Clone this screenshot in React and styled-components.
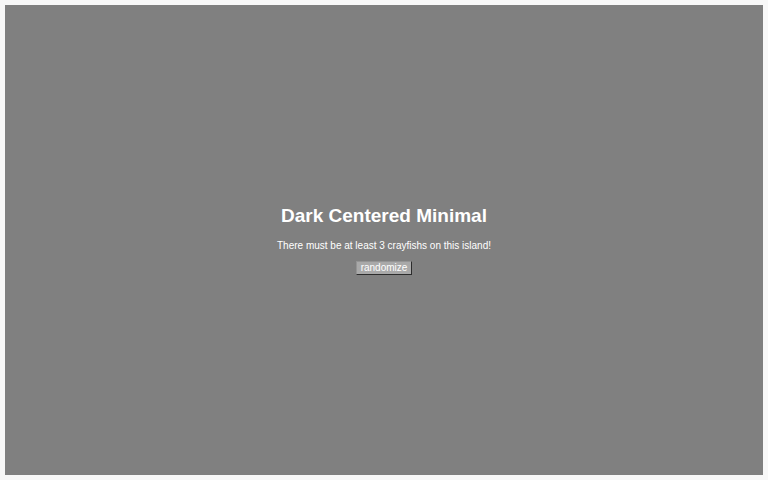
import { useState } from "react";
import styled, { createGlobalStyle } from "styled-components";

const randomCount = () => Math.floor(Math.random() * 10) + 1;

export default function App() {
  const [count, setCount] = useState(3);

  return (
    <>
      <GlobalStyle />
      <Screen>
        <Title>Dark Centered Minimal</Title>
        <Message>There must be at least {count} crayfishs on this island!</Message>
        <RandomizeButton type="button" onClick={() => setCount(randomCount())}>
          randomize
        </RandomizeButton>
      </Screen>
    </>
  );
}

const GlobalStyle = createGlobalStyle`
  * {
    box-sizing: border-box;
  }

  body {
    margin: 0;
    background: #f8f8f8;
    font-family: "Liberation Sans", Arial, sans-serif;
    font-size: 10px;
  }
`;

const Screen = styled.main`
  display: flex;
  flex-direction: column;
  align-items: center;
  justify-content: center;
  min-height: calc(100vh - 10px);
  margin: 5px;
  background: #808080;
  color: white;
  text-align: center;
`;

const Title = styled.h1`
  margin: 0 0 13px;
  font-size: 19px;
  line-height: 22px;
`;

const Message = styled.p`
  margin: 0 0 9px;
  font-size: 10px;
  line-height: 12px;
`;

const RandomizeButton = styled.button`
  padding: 1px 4px;
  border: 1px solid;
  border-color: #949494 #2c2c2c #2c2c2c #949494;
  background: #a9a9a9;
  color: white;
  font-family: inherit;
  font-size: 10px;
  line-height: 10px;
`;
